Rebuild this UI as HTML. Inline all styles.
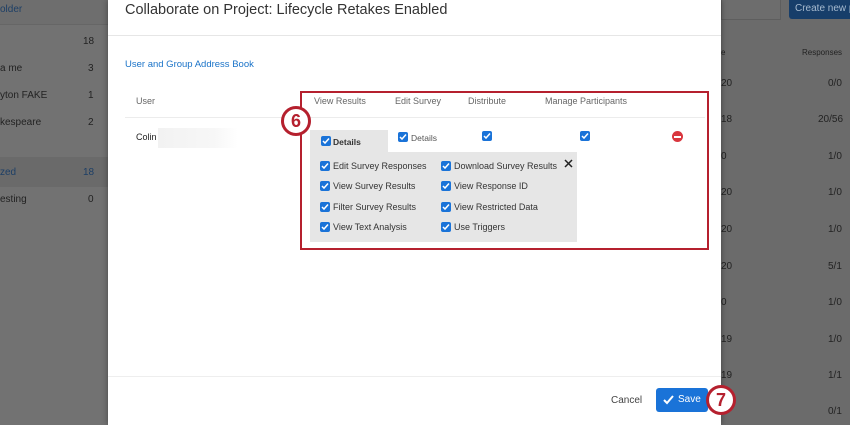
<!DOCTYPE html>
<html style="background:#6b6b6b"><head><meta charset="utf-8"><style>
*{box-sizing:border-box;margin:0;padding:0}
body{width:850px;height:425px;overflow:hidden;font-family:"Liberation Sans",sans-serif;background:#6b6b6b;position:relative}
.abs{position:absolute}
.lt{color:#222;font-size:10px}
.modal{position:absolute;left:108px;top:0;width:613px;height:425px;background:#fff;box-shadow:0 0 6px rgba(0,0,0,.4)}
.cb{position:absolute;width:10px;height:10px;background:#1a73d8;border-radius:2px}
.cb svg{position:absolute;left:1px;top:1px}
.t{position:absolute;font-size:9px;color:#333;white-space:nowrap}
.circ{position:absolute;width:30px;height:30px;border:3px solid #b5202e;border-radius:50%;background:#fff;color:#b5202e;font-size:18px;font-weight:bold;text-align:center;line-height:24px}
</style></head><body>
<div class="abs" style="left:0;top:0;width:108px;height:425px;background:#727272"></div>
<div class="abs" style="left:0;top:0;width:108px;height:25px;background:#6e6e6e;border-bottom:1px solid #666"></div>
<div class="abs" style="left:0;top:4px;font-size:10px;color:#1d3f66">older</div>
<div class="abs lt" style="left:83px;top:36px">18</div>
<div class="abs lt" style="left:0;top:63px">a me</div><div class="abs lt" style="left:88px;top:63px">3</div>
<div class="abs lt" style="left:0;top:90px">yton FAKE</div><div class="abs lt" style="left:88px;top:90px">1</div>
<div class="abs lt" style="left:0;top:117px">kespeare</div><div class="abs lt" style="left:88px;top:117px">2</div>
<div class="abs" style="left:0;top:157px;width:108px;height:30px;background:#6a6a6a"></div>
<div class="abs" style="left:0;top:167px;font-size:10px;color:#1d3f66">zed</div><div class="abs" style="left:83px;top:167px;font-size:10px;color:#1d3f66">18</div>
<div class="abs lt" style="left:0;top:194px">esting</div><div class="abs lt" style="left:88px;top:194px">0</div>

<div class="abs" style="left:721px;top:0;width:60px;height:20px;border:1px solid #5e5e5e;background:#6d6d6d;border-top:none"></div>
<div class="abs" style="left:789px;top:0;width:70px;height:19px;background:#173e6a;border-radius:0 0 0 3px;color:#a7bbd0;font-size:10px;padding:3px 0 0 6px">Create new p</div>
<div class="abs lt" style="left:721px;top:48px;font-size:8px">e</div>
<div class="abs lt" style="left:802px;top:48px;font-size:8px">Responses</div>
<div class="abs lt" style="left:721px;top:78px">20</div><div class="abs lt" style="left:828px;top:78px">0/0</div>
<div class="abs lt" style="left:721px;top:114px">18</div><div class="abs lt" style="left:818px;top:114px">20/56</div>
<div class="abs lt" style="left:721px;top:151px">0</div><div class="abs lt" style="left:828px;top:151px">1/0</div>
<div class="abs lt" style="left:721px;top:187px">20</div><div class="abs lt" style="left:828px;top:187px">1/0</div>
<div class="abs lt" style="left:721px;top:224px">20</div><div class="abs lt" style="left:828px;top:224px">1/0</div>
<div class="abs lt" style="left:721px;top:261px">20</div><div class="abs lt" style="left:828px;top:261px">5/1</div>
<div class="abs lt" style="left:721px;top:297px">0</div><div class="abs lt" style="left:828px;top:297px">1/0</div>
<div class="abs lt" style="left:721px;top:334px">19</div><div class="abs lt" style="left:828px;top:334px">1/0</div>
<div class="abs lt" style="left:721px;top:370px">19</div><div class="abs lt" style="left:828px;top:370px">1/1</div>
<div class="abs lt" style="left:721px;top:406px">9</div><div class="abs lt" style="left:828px;top:406px">0/1</div>

<div class="modal">
<div class="abs" style="left:17px;top:2px;font-size:14.5px;color:#333">Collaborate on Project: Lifecycle Retakes Enabled</div>
<div class="abs" style="left:0;top:35px;width:613px;height:1px;background:#e6e6e6"></div>
<div class="abs" style="left:17px;top:59px;font-size:9.5px;color:#1a73c8">User and Group Address Book</div>
<div class="abs" style="left:17px;top:117px;width:580px;height:1px;background:#ececec"></div>
<div class="t" style="left:28px;top:96px;color:#666">User</div>
<div class="t" style="left:28px;top:132px;color:#222">Colin</div>
<div class="abs" style="left:50px;top:128px;width:80px;height:20px;background:linear-gradient(90deg,#f2f2f2,#f7f7f7 70%,#fff)"></div>
<div class="t" style="left:206px;top:96px;color:#666">View Results</div>
<div class="t" style="left:287px;top:96px;color:#666">Edit Survey</div>
<div class="t" style="left:360px;top:96px;color:#666">Distribute</div>
<div class="t" style="left:437px;top:96px;color:#666">Manage Participants</div>

<div class="abs" style="left:202px;top:130px;width:78px;height:24px;background:#e6e6e6"></div>
<div class="abs" style="left:202px;top:152px;width:267px;height:90px;background:#e6e6e6"></div>
<div class="cb" style="left:213px;top:136px"><svg width="8" height="8" viewBox="0 0 8 8"><path d="M1 4l2 2 4-4.5" stroke="#fff" stroke-width="1.5" fill="none"/></svg></div>
<div class="t" style="left:225px;top:137px;font-weight:bold;font-size:8.5px">Details</div>
<div class="cb" style="left:290px;top:132px"><svg width="8" height="8" viewBox="0 0 8 8"><path d="M1 4l2 2 4-4.5" stroke="#fff" stroke-width="1.5" fill="none"/></svg></div>
<div class="t" style="left:303px;top:133px;font-size:8.5px;color:#555">Details</div>
<div class="cb" style="left:374px;top:131px"><svg width="8" height="8" viewBox="0 0 8 8"><path d="M1 4l2 2 4-4.5" stroke="#fff" stroke-width="1.5" fill="none"/></svg></div>
<div class="cb" style="left:472px;top:131px"><svg width="8" height="8" viewBox="0 0 8 8"><path d="M1 4l2 2 4-4.5" stroke="#fff" stroke-width="1.5" fill="none"/></svg></div>
<div class="abs" style="left:564px;top:131px;width:11px;height:11px;border-radius:50%;background:#d9363e"><div style="position:absolute;left:2px;top:4.5px;width:7px;height:2px;background:#fff"></div></div>

<div class="cb" style="left:212px;top:161px"><svg width="8" height="8" viewBox="0 0 8 8"><path d="M1 4l2 2 4-4.5" stroke="#fff" stroke-width="1.5" fill="none"/></svg></div>
<div class="t" style="left:225px;top:161px">Edit Survey Responses</div>
<div class="cb" style="left:212px;top:181px"><svg width="8" height="8" viewBox="0 0 8 8"><path d="M1 4l2 2 4-4.5" stroke="#fff" stroke-width="1.5" fill="none"/></svg></div>
<div class="t" style="left:225px;top:181px">View Survey Results</div>
<div class="cb" style="left:212px;top:202px"><svg width="8" height="8" viewBox="0 0 8 8"><path d="M1 4l2 2 4-4.5" stroke="#fff" stroke-width="1.5" fill="none"/></svg></div>
<div class="t" style="left:225px;top:202px">Filter Survey Results</div>
<div class="cb" style="left:212px;top:222px"><svg width="8" height="8" viewBox="0 0 8 8"><path d="M1 4l2 2 4-4.5" stroke="#fff" stroke-width="1.5" fill="none"/></svg></div>
<div class="t" style="left:225px;top:222px">View Text Analysis</div>
<div class="cb" style="left:333px;top:161px"><svg width="8" height="8" viewBox="0 0 8 8"><path d="M1 4l2 2 4-4.5" stroke="#fff" stroke-width="1.5" fill="none"/></svg></div>
<div class="t" style="left:346px;top:161px">Download Survey Results</div>
<div class="cb" style="left:333px;top:181px"><svg width="8" height="8" viewBox="0 0 8 8"><path d="M1 4l2 2 4-4.5" stroke="#fff" stroke-width="1.5" fill="none"/></svg></div>
<div class="t" style="left:346px;top:181px">View Response ID</div>
<div class="cb" style="left:333px;top:202px"><svg width="8" height="8" viewBox="0 0 8 8"><path d="M1 4l2 2 4-4.5" stroke="#fff" stroke-width="1.5" fill="none"/></svg></div>
<div class="t" style="left:346px;top:202px">View Restricted Data</div>
<div class="cb" style="left:333px;top:222px"><svg width="8" height="8" viewBox="0 0 8 8"><path d="M1 4l2 2 4-4.5" stroke="#fff" stroke-width="1.5" fill="none"/></svg></div>
<div class="t" style="left:346px;top:222px">Use Triggers</div>
<svg class="abs" style="left:456px;top:159px" width="9" height="9" viewBox="0 0 9 9"><path d="M1 1l7 7M8 1l-7 7" stroke="#222" stroke-width="1.5"/></svg>

<div class="abs" style="left:192px;top:91px;width:409px;height:159px;border:2.5px solid #b5202e"></div>
<div class="circ" style="left:173px;top:106px">6</div>

<div class="abs" style="left:0;top:376px;width:613px;height:1px;background:#eee"></div>
<div class="t" style="left:503px;top:395px;font-size:10px;color:#444">Cancel</div>
<div class="abs" style="left:548px;top:388px;width:52px;height:24px;background:#1a73d8;border-radius:3px;color:#fff;font-size:10px;line-height:24px;padding-left:22px">Save</div>
<svg class="abs" style="left:555px;top:395px" width="11" height="10" viewBox="0 0 11 10"><path d="M1 5l3 3 6-7" stroke="#fff" stroke-width="2" fill="none"/></svg>
</div>
<div class="circ" style="left:706px;top:385px">7</div>
</body></html>
